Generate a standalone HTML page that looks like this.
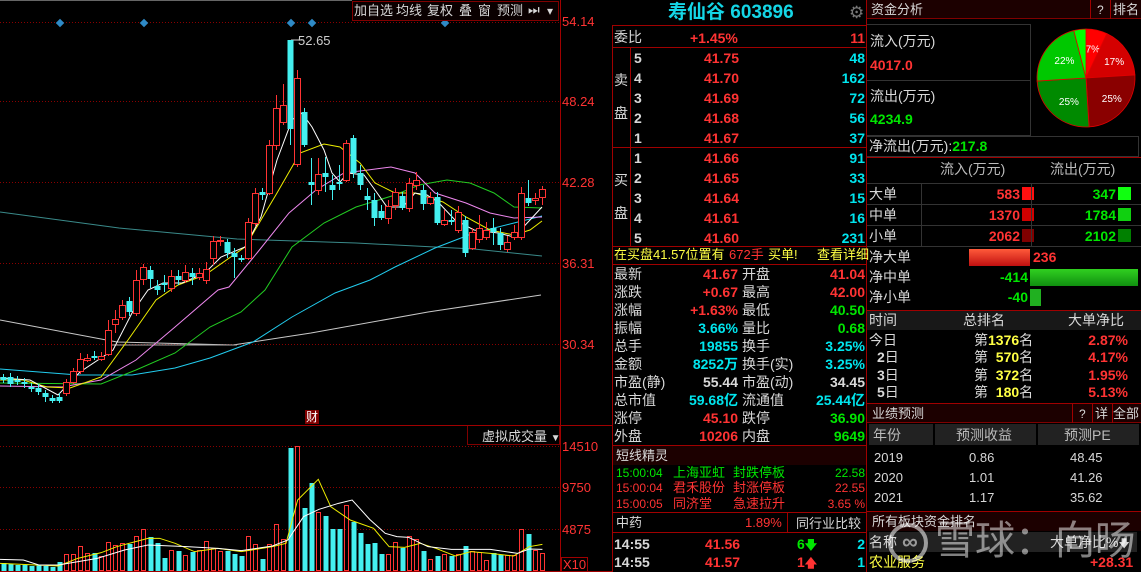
<!DOCTYPE html>
<html><head><meta charset="utf-8">
<style>
*{margin:0;padding:0;box-sizing:border-box}
body{width:1141px;height:572px;background:#000;overflow:hidden;position:relative;font-family:"Liberation Sans","Noto Sans CJK SC",sans-serif;color:#ccc}
.a{position:absolute;white-space:nowrap;line-height:1}
.f14{font-size:14px}.f13{font-size:13px}.f12{font-size:12px}
.r{color:#ff3333}.c{color:#00e5ee}.g{color:#00e600}.w{color:#d8d8d8}.y{color:#ffff44}
.b{font-weight:bold}
.hl{position:absolute;height:1px;background:#a00000}
.vl{position:absolute;width:1px;background:#a00000}
.rt{text-align:right}
</style></head><body>
<svg id="ch" width="612" height="572" style="position:absolute;left:0;top:0">
</svg>

<!-- toolbar -->
<div class="a" style="left:352px;top:1px;width:207px;height:20px;border:1px solid #800000;background:#0a0000"></div>
<div class="a f13 w" style="left:354px;top:4px;letter-spacing:0">加自选</div>
<div class="a f13 w" style="left:396px;top:4px">均线</div>
<div class="a f13 w" style="left:427px;top:4px">复权</div>
<div class="a f13 w" style="left:459px;top:4px">叠</div>
<div class="a f13 w" style="left:478px;top:4px">窗</div>
<div class="a f13 w" style="left:497px;top:4px">预测</div>
<div class="a f13 w" style="left:528px;top:3px">⏭</div>
<div class="a f12 w" style="left:547px;top:5px">▾</div>

<!-- price axis labels -->
<div class="a f13 r" style="left:562px;top:15px">54.14</div>
<div class="a f13 r" style="left:562px;top:95px">48.24</div>
<div class="a f13 r" style="left:562px;top:176px">42.28</div>
<div class="a f13 r" style="left:562px;top:257px">36.31</div>
<div class="a f13 r" style="left:562px;top:338px">30.34</div>
<div class="a f13 r" style="left:562px;top:440px">14510</div>
<div class="a f13 r" style="left:562px;top:481px">9750</div>
<div class="a f13 r" style="left:562px;top:523px">4875</div>
<div class="a f13 r" style="left:561px;top:557px;border:1px solid #a00000;padding:0 1px">X10</div>
<div class="a f13 w" style="left:298px;top:34px;color:#ccc">52.65</div>
<div class="a f12" style="left:305px;top:410px;background:#800000;color:#fff;padding:1px 1px">财</div>
<div class="a" style="left:467px;top:426px;width:93px;height:19px;border:1px solid #800000;border-top:none"></div>
<div class="a f13 w" style="left:482px;top:430px">虚拟成交量 <span style="font-size:10px">▼</span></div>

<!-- middle column -->
<div class="a b c" style="left:668px;top:3px;font-size:19px;color:#14d6e6">寿仙谷 603896</div>
<div class="a" style="left:849px;top:4px;font-size:17px;color:#777">⚙</div>
<div class="vl" style="left:612px;top:25px;height:547px"></div>
<div class="vl" style="left:866px;top:0;height:572px"></div>
<div class="hl" style="left:612px;top:25px;width:254px"></div>
<div class="hl" style="left:612px;top:47px;width:254px"></div>
<div class="hl" style="left:612px;top:147px;width:254px"></div>
<div class="hl" style="left:612px;top:246px;width:254px"></div>
<div class="hl" style="left:612px;top:264px;width:254px"></div>
<div class="vl" style="left:630px;top:47px;height:199px"></div>
<div class="a f14 w" style="left:614px;top:30px">委比</div>
<div class="a f14 r b" style="left:690px;top:31px">+1.45%</div>
<div class="a f14 r b rt" style="left:800px;top:31px;width:65px">11</div>
<div class="a f14 w" style="left:614px;top:73px">卖</div>
<div class="a f14 w" style="left:614px;top:106px">盘</div>
<div class="a f14 w" style="left:614px;top:173px">买</div>
<div class="a f14 w" style="left:614px;top:206px">盘</div>
<div id="ob"></div>
<div class="a f13 y" style="left:614px;top:248px">在买盘41.57位置有</div>
<div class="a f13 r" style="left:729px;top:248px">672手</div>
<div class="a f13 y" style="left:768px;top:248px">买单!</div>
<div class="a f13 y" style="left:817px;top:248px">查看详细</div>
<div id="st"></div>
<div class="a" style="left:613px;top:445px;width:253px;height:20px;background:#1c0000"></div>
<div class="hl" style="left:612px;top:445px;width:254px"></div>
<div class="a f13 w" style="left:616px;top:449px">短线精灵</div>
<div class="a f12 g" style="left:616px;top:467px">15:00:04</div><div class="a f13 g" style="left:673px;top:466px">上海亚虹</div><div class="a f13 g" style="left:733px;top:466px">封跌停板</div><div class="a f12 g rt" style="left:800px;top:467px;width:65px">22.58</div>
<div class="a f12 r" style="left:616px;top:482px">15:00:04</div><div class="a f13 r" style="left:673px;top:481px">君禾股份</div><div class="a f13 r" style="left:733px;top:481px">封涨停板</div><div class="a f12 r rt" style="left:800px;top:482px;width:65px">22.55</div>
<div class="a f12 r" style="left:616px;top:498px">15:00:05</div><div class="a f13 r" style="left:673px;top:497px">同济堂</div><div class="a f13 r" style="left:733px;top:497px">急速拉升</div><div class="a f12 r rt" style="left:800px;top:498px;width:65px">3.65 %</div>
<div class="hl" style="left:612px;top:512px;width:254px"></div>
<div class="hl" style="left:612px;top:532px;width:254px"></div>
<div class="vl" style="left:787px;top:512px;height:20px"></div>
<div class="a f13 w" style="left:616px;top:516px">中药</div>
<div class="a f13 r" style="left:745px;top:516px">1.89%</div>
<div class="a f13 w" style="left:796px;top:517px">同行业比较</div>
<div class="a f14 w b" style="left:614px;top:537px">14:55</div><div class="a f14 r b" style="left:705px;top:537px">41.56</div><div class="a f14 g b" style="left:797px;top:537px">6<span style="font-size:12px">🡇</span></div><div class="a f14 c b rt" style="left:840px;top:537px;width:25px">2</div>
<div class="a f14 w b" style="left:614px;top:555px">14:55</div><div class="a f14 r b" style="left:705px;top:555px">41.57</div><div class="a f14 r b" style="left:797px;top:555px">1<span style="font-size:12px">🡅</span></div><div class="a f14 c b rt" style="left:840px;top:555px;width:25px">1</div>

<!-- right column -->
<div class="a" style="left:867px;top:0;width:274px;height:19px;background:#1c0000;border-bottom:1px solid #800000"></div>
<div class="a f13 w" style="left:871px;top:3px">资金分析</div>
<div class="vl" style="left:1090px;top:0;height:19px"></div><div class="vl" style="left:1110px;top:0;height:19px"></div>
<div class="a f12 w" style="left:1097px;top:4px">?</div>
<div class="a f13 w" style="left:1113px;top:3px">排名</div>
<div class="a" style="left:867px;top:24px;width:164px;height:112px;border:1px solid #333;border-left:none"></div>
<div class="a" style="left:867px;top:80px;width:164px;height:1px;background:#333"></div>
<div class="a f14 w" style="left:870px;top:34px">流入(万元)</div>
<div class="a f14 r b" style="left:870px;top:58px">4017.0</div>
<div class="a f14 w" style="left:870px;top:89px">流出(万元)</div>
<div class="a f14 g b" style="left:870px;top:112px">4234.9</div>
<svg width="112" height="112" style="position:absolute;left:1030px;top:22px" id="pie"></svg>
<div class="a" style="left:867px;top:136px;width:272px;height:21px;border:1px solid #333;border-left:none"></div>
<div class="a f14 w" style="left:869px;top:139px">净流出(万元):<span class="g b">217.8</span></div>
<div class="hl" style="left:867px;top:157px;width:274px"></div>
<div class="a f14" style="left:940px;top:162px;color:#bbb">流入(万元)</div>
<div class="a f14" style="left:1050px;top:162px;color:#bbb">流出(万元)</div>
<div id="tb"></div>
<div class="a f14 w" style="left:869px;top:250px">净大单</div>
<div class="a" style="left:969px;top:249px;width:61px;height:17px;background:linear-gradient(#ff5a3a,#c01010)"></div>
<div class="a f14 r b" style="left:1033px;top:250px">236</div>
<div class="a f14 w" style="left:869px;top:270px">净中单</div>
<div class="a f14 g b rt" style="left:990px;top:270px;width:38px">-414</div>
<div class="a" style="left:1030px;top:269px;width:108px;height:17px;background:linear-gradient(#30d020,#109010)"></div>
<div class="a f14 w" style="left:869px;top:290px">净小单</div>
<div class="a f14 g b rt" style="left:990px;top:290px;width:38px">-40</div>
<div class="a" style="left:1030px;top:289px;width:11px;height:17px;background:#20b020"></div>
<div class="hl" style="left:867px;top:310px;width:274px"></div>
<div class="a" style="left:867px;top:311px;width:274px;height:19px;background:#181818"></div>
<div class="a f14 w" style="left:869px;top:313px">时间</div>
<div class="a f14 w" style="left:963px;top:313px">总排名</div>
<div class="a f14 w" style="left:1068px;top:313px">大单净比</div>
<div class="a f14 w" style="left:869px;top:333px">今日</div><div class="a f14 w" style="left:974px;top:333px">第<span class="y b">1376</span>名</div><div class="a f14 r b rt" style="left:1070px;top:333px;width:58px">2.87%</div>
<div class="a f14 w" style="left:877px;top:350px"><b>2</b>日</div><div class="a f14 w" style="left:974px;top:350px">第 <span class="y b">&nbsp;570</span>名</div><div class="a f14 r b rt" style="left:1070px;top:350px;width:58px">4.17%</div>
<div class="a f14 w" style="left:877px;top:368px"><b>3</b>日</div><div class="a f14 w" style="left:974px;top:368px">第 <span class="y b">&nbsp;372</span>名</div><div class="a f14 r b rt" style="left:1070px;top:368px;width:58px">1.95%</div>
<div class="a f14 w" style="left:877px;top:385px"><b>5</b>日</div><div class="a f14 w" style="left:974px;top:385px">第 <span class="y b">&nbsp;180</span>名</div><div class="a f14 r b rt" style="left:1070px;top:385px;width:58px">5.13%</div>
<div class="hl" style="left:867px;top:403px;width:274px"></div>
<div class="a" style="left:867px;top:404px;width:274px;height:19px;background:#1c0000;border-bottom:1px solid #800000"></div>
<div class="a f13 w" style="left:872px;top:407px">业绩预测</div>
<div class="vl" style="left:1072px;top:404px;height:19px"></div><div class="vl" style="left:1092px;top:404px;height:19px"></div><div class="vl" style="left:1112px;top:404px;height:19px"></div>
<div class="a f12 w" style="left:1079px;top:408px">?</div>
<div class="a f13 w" style="left:1095px;top:407px">详</div>
<div class="a f13 w" style="left:1113px;top:407px">全部</div>
<div class="a" style="left:869px;top:424px;width:64px;height:21px;background:#222"></div>
<div class="a" style="left:935px;top:424px;width:101px;height:21px;background:#222"></div>
<div class="a" style="left:1038px;top:424px;width:101px;height:21px;background:#222"></div>
<div class="a f14" style="left:873px;top:428px;color:#bbb">年份</div>
<div class="a f14" style="left:956px;top:428px;color:#bbb">预测收益</div>
<div class="a f14" style="left:1064px;top:428px;color:#bbb">预测PE</div>
<div class="a f13 w" style="left:874px;top:451px">2019</div><div class="a f13 w" style="left:969px;top:451px">0.86</div><div class="a f13 w" style="left:1070px;top:451px">48.45</div>
<div class="a f13 w" style="left:874px;top:471px">2020</div><div class="a f13 w" style="left:969px;top:471px">1.01</div><div class="a f13 w" style="left:1070px;top:471px">41.26</div>
<div class="a f13 w" style="left:874px;top:491px">2021</div><div class="a f13 w" style="left:969px;top:491px">1.17</div><div class="a f13 w" style="left:1070px;top:491px">35.62</div>
<div class="hl" style="left:867px;top:511px;width:274px"></div>
<div class="a" style="left:867px;top:512px;width:274px;height:19px;background:#1c0000"></div>
<div class="a f13 w" style="left:872px;top:515px">所有板块资金排名</div>
<div class="a" style="left:869px;top:532px;width:268px;height:20px;background:#222"></div>
<div class="a f14 w" style="left:869px;top:535px">名称</div>
<div class="a f14 w" style="left:1050px;top:535px">大单净比%<span style="font-size:11px">🡇</span></div>
<div class="a f14 y" style="left:869px;top:555px">农业服务</div>
<div class="a f14 r b" style="left:1090px;top:555px">+28.31</div>
<!-- watermark -->
<div class="a" style="left:888px;top:523px;width:40px;height:40px;border:4px solid rgba(255,255,255,0.55);border-radius:50%"></div>
<div class="a" style="left:902px;top:531px;font-size:22px;color:rgba(255,255,255,0.55);font-weight:bold">∞</div>
<div class="a" style="left:935px;top:521px;font-size:40px;color:rgba(255,255,255,0.5)">雪球：向旸</div>

<script>
const S='http://www.w3.org/2000/svg';
const svg=document.getElementById('ch');
function el(t,a){const e=document.createElementNS(S,t);for(const k in a)e.setAttribute(k,a[k]);svg.appendChild(e);return e;}
// grid
[22,101,182,263,344].forEach(y=>el('line',{x1:0,x2:560,y1:y+.5,y2:y+.5,stroke:'#8a0000','stroke-dasharray':'1,2'}));
[446,487,529].forEach(y=>el('line',{x1:0,x2:560,y1:y+.5,y2:y+.5,stroke:'#8a0000','stroke-dasharray':'1,2'}));
el('line',{x1:560.5,x2:560.5,y1:0,y2:572,stroke:'#a00000'});
el('line',{x1:0,x2:612,y1:425.5,y2:425.5,stroke:'#a00000'});
el('line',{x1:0,x2:612,y1:571.5,y2:571.5,stroke:'#a00000'});
el('line',{x1:0,x2:352,y1:0.5,y2:0.5,stroke:'#666'});
[60,144,291,312,445].forEach(x=>el('rect',{x:x-3,y:20,width:6,height:6,fill:'#2e8ac6',transform:`rotate(45 ${x} 23)`}));
el('line',{x1:291,x2:304,y1:40,y2:40,stroke:'#ccc'});
// MAs
function pl(pts,c){el('polyline',{points:pts.map(p=>p.join(',')).join(' '),fill:'none',stroke:c,'stroke-width':1});}
pl([[0,212],[119,228],[237,239],[356,243],[474,249],[542,256]],'#3a8a8a');
pl([[0,320],[117,342],[233,345],[311,333],[428,312],[541,295]],'#c8c8c8');
pl([[105,345],[237,345]],'#aaa');
pl([[0,369],[78,375],[132,375],[175,368],[210,358],[253,342],[292,317],[335,293],[370,280],[395,267],[435,248],[474,233],[514,223],[542,216]],'#22ccee');
pl([[0,383],[101,384],[136,370],[175,353],[210,327],[241,312],[265,290],[292,247],[324,223],[356,207],[395,195],[419,185],[447,180],[470,183],[494,193],[514,207],[542,208]],'#22cc22');
pl([[0,386],[62,387],[101,380],[136,360],[175,327],[218,290],[229,287],[257,253],[289,213],[316,190],[344,173],[368,170],[391,167],[415,173],[435,193],[466,203],[490,213],[514,218],[542,217]],'#ee88ee');
pl([[0,380],[23,380],[47,387],[70,388],[101,377],[128,340],[156,300],[178,285],[205,275],[245,247],[277,193],[300,153],[324,144],[340,147],[360,163],[375,183],[395,193],[415,193],[443,202],[466,217],[490,230],[514,235],[530,230],[542,221]],'#eeee00');
pl([[0,378],[30,380],[58,395],[80,372],[113,350],[132,313],[148,290],[163,283],[182,283],[205,273],[221,257],[245,247],[261,217],[277,160],[292,120],[302,113],[312,127],[324,150],[332,173],[340,182],[348,173],[364,175],[375,190],[387,207],[403,207],[415,193],[427,195],[439,203],[455,220],[474,230],[498,233],[514,237],[530,220],[542,207]],'#ffffff');
// candles [top,bot,hi,lo,c]
const C=[[377,380,374,383,'c'],[377,384,373,387,'c'],[380,382,376,385,'c'],[382,384,378,388,'c'],[387,389,383,392,'c'],[388,392,384,395,'c'],[393,397,390,402,'c'],[398,401,395,403,'c'],[397,401,393,403,'c'],[382,393,379,396,'r'],[371,382,368,384,'r'],[359,371,353,374,'r'],[358,360,354,362,'r'],[356,358,351,360,'c'],[356,359,352,361,'r'],[330,354,320,356,'r'],[319,324,310,333,'r'],[305,317,300,320,'r'],[301,312,297,316,'c'],
[280,313,270,316,'r'],[267,279,264,285,'r'],[270,279,266,288,'c'],[286,290,280,295,'c'],[283,285,275,292,'c'],[276,288,270,292,'r'],[276,280,270,285,'c'],[272,280,265,283,'r'],[273,277,268,285,'c'],[273,277,268,280,'r'],[269,280,262,284,'r'],[241,258,236,265,'r'],[240,241,236,246,'r'],[242,253,239,258,'c'],[253,257,248,278,'c'],[258,260,255,262,'c'],[222,258,218,260,'r'],[193,223,188,226,'r'],[192,195,188,200,'c'],[145,193,140,195,'r'],[108,145,95,150,'r'],[105,122,84,125,'r'],[40,129,40,145,'c'],[78,164,70,167,'r'],[112,145,108,147,'c'],[182,185,158,205,'c'],[174,190,158,195,'r'],[173,177,157,192,'c'],[185,190,175,200,'c'],[182,184,165,190,'c'],[143,180,140,182,'r'],[138,173,135,178,'c'],[173,185,165,190,'c'],[196,200,188,210,'c'],[200,218,193,226,'c'],[211,218,205,220,'c'],[206,218,200,224,'r'],[192,205,188,210,'r'],[196,208,192,210,'c'],[183,208,178,212,'r'],[180,185,172,190,'r'],[190,204,185,210,'c'],[197,203,192,205,'r'],[197,223,192,225,'c'],[220,224,210,226,'r'],[220,222,210,225,'c'],[212,230,206,233,'r'],[220,253,216,257,'c'],[232,248,228,250,'r'],[228,239,215,243,'r'],[230,237,222,240,'r'],[228,232,218,245,'c'],[233,245,228,250,'c'],[242,249,236,252,'r'],[232,237,225,240,'r'],[193,237,187,240,'r'],[198,203,180,206,'c'],[198,200,193,205,'r'],[189,197,186,205,'r']];
const V=[563,564,565,565,566,565,566,567,562,554,554,546,553,553,556,542,545,543,544,536,529,537,543,558,550,551,555,552,550,541,548,551,551,554,556,536,544,559,544,524,539,448,446,508,483,512,516,529,529,505,522,533,544,543,554,554,542,548,536,539,551,559,556,554,556,554,546,551,552,560,553,555,555,555,529,534,550,553];
C.forEach((d,i)=>{const x=3+i*7;const col=d[4]=='r'?'#ff3333':'#44f0f0';
 el('line',{x1:x+.5,x2:x+.5,y1:d[2],y2:d[3],stroke:col});
 const h=Math.max(1,d[1]-d[0]);
 if(d[4]=='r')el('rect',{x:x-2.5,y:d[0]+.5,width:6,height:h,fill:'#000',stroke:col});
 else el('rect',{x:x-2.5,y:d[0],width:6,height:h,fill:col});
 const vt=V[i]||560;const vc=d[4]=='r';
 if(vc)el('rect',{x:x-1.5,y:vt+.5,width:4,height:570-vt,fill:'none',stroke:'#ff3333'});
 else el('rect',{x:x-1.5,y:vt,width:5,height:571-vt,fill:'#44f0f0'});
});
function zp(a){return a.map(p=>[p[0]/2.57,p[1]/3+280]);}
pl(zp([[0,850],[150,858],[200,835],[260,818],[300,800],[380,775],[410,775],[450,790],[500,815],[560,805],[620,815],[700,800],[735,790],[765,660],[818,598],[850,680],[900,720],[960,745],[1000,800],[1040,802],[1080,790],[1120,805],[1170,828],[1210,815],[1260,820],[1320,828],[1360,800],[1394,793]]),'#eeee00');
pl(zp([[0,838],[60,840],[100,855],[150,855],[250,835],[320,810],[380,795],[480,800],[560,805],[620,812],[700,798],[740,780],[780,710],[820,688],[870,670],[905,660],[950,718],[990,760],[1020,770],[1050,772],[1100,800],[1160,808],[1260,808],[1330,820],[1360,807],[1394,808]]),'#ffffff');

// order book
const ob=document.getElementById('ob');let h='';
const rows=[['5','41.75','48'],['4','41.70','162'],['3','41.69','72'],['2','41.68','56'],['1','41.67','37'],['1','41.66','91'],['2','41.65','33'],['3','41.64','15'],['4','41.61','16'],['5','41.60','231']];
rows.forEach((r,i)=>{const y=51+i*20;h+=`<div class="a f14 w b" style="left:634px;top:${y}px">${r[0]}</div><div class="a f14 r b rt" style="left:680px;top:${y}px;width:59px">${r[1]}</div><div class="a f14 c b rt" style="left:800px;top:${y}px;width:65px">${r[2]}</div>`});
ob.innerHTML=h;
const st=[['最新','41.67','r','开盘','41.04','r'],['涨跌','+0.67','r','最高','42.00','r'],['涨幅','+1.63%','r','最低','40.50','g'],['振幅','3.66%','c','量比','0.68','g'],['总手','19855','c','换手','3.25%','c'],['金额','8252万','c','换手(实)','3.25%','c'],['市盈(静)','55.44','w','市盈(动)','34.45','w'],['总市值','59.68亿','c','流通值','25.44亿','c'],['涨停','45.10','r','跌停','36.90','g'],['外盘','10206','r','内盘','9649','g']];
h='';st.forEach((r,i)=>{const y=267+i*18;h+=`<div class="a f14 w" style="left:614px;top:${y}px">${r[0]}</div><div class="a f14 ${r[2]} b rt" style="left:670px;top:${y}px;width:68px">${r[1]}</div><div class="a f14 w" style="left:742px;top:${y}px">${r[3]}</div><div class="a f14 ${r[5]} b rt" style="left:800px;top:${y}px;width:65px">${r[4]}</div>`});
document.getElementById('st').innerHTML=h;
// money table
h='';[['大单','583','#ff1010','347','#10ff10'],['中单','1370','#d00000','1784','#10d010'],['小单','2062','#800000','2102','#008000']].forEach((r,i)=>{const y=183+i*21;
h+=`<div class="a" style="left:867px;top:${y}px;width:274px;height:1px;background:#333"></div><div class="a f14 w" style="left:869px;top:${y+4}px">${r[0]}</div><div class="a f14 r b rt" style="left:960px;top:${y+4}px;width:60px">${r[1]}</div><div class="a" style="left:1022px;top:${y+4}px;width:12px;height:13px;background:${r[2]}"></div><div class="a f14 g b rt" style="left:1055px;top:${y+4}px;width:61px">${r[3]}</div><div class="a" style="left:1118px;top:${y+4}px;width:13px;height:13px;background:${r[4]}"></div>`});
h+=`<div class="a" style="left:921px;top:183px;width:1px;height:63px;background:#333"></div><div class="a" style="left:1031px;top:183px;width:1px;height:63px;background:#333"></div><div class="a" style="left:867px;top:246px;width:274px;height:1px;background:#333"></div>`;
document.getElementById('tb').innerHTML=h;
// pie
const pie=document.getElementById('pie');const cx=56,cy=56,R=49;
const sl=[[7,'#ff0000','7%'],[17,'#d40000','17%'],[25,'#8a0000','25%'],[25,'#008a00','25%'],[22,'#00c800','22%'],[4,'#00ff00','']];
let a0=-Math.PI/2;sl.forEach(s=>{const a1=a0+s[0]/100*2*Math.PI;const x0=cx+R*Math.cos(a0),y0=cy+R*Math.sin(a0),x1=cx+R*Math.cos(a1),y1=cy+R*Math.sin(a1);
const p=document.createElementNS(S,'path');p.setAttribute('d',`M${cx},${cy}L${x0},${y0}A${R},${R} 0 ${s[0]>50?1:0} 1 ${x1},${y1}Z`);p.setAttribute('fill',s[1]);p.setAttribute('stroke','#e00000');p.setAttribute('stroke-width','0.8');pie.appendChild(p);
const am=(a0+a1)/2;if(s[2]){const t=document.createElementNS(S,'text');t.setAttribute('x',cx+R*0.62*Math.cos(am)-7);t.setAttribute('y',cy+R*0.62*Math.sin(am)+4);t.setAttribute('fill','#fff');t.setAttribute('font-size','10');t.setAttribute('font-family','Liberation Sans');t.textContent=s[2];pie.appendChild(t);}
a0=a1;});
</script>
</body></html>
